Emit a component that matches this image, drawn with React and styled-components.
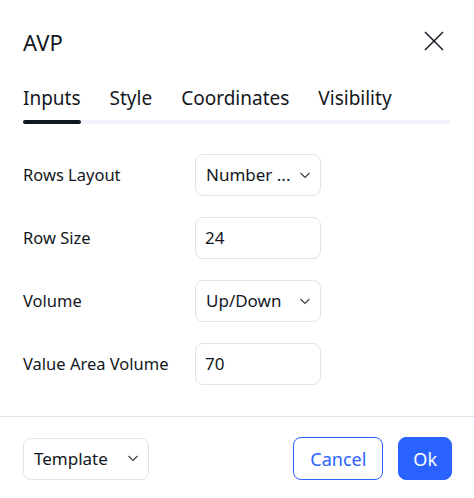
import React, { useState } from 'react';
import styled, { createGlobalStyle } from 'styled-components';

const GlobalStyle = createGlobalStyle`
  html, body {
    margin: 0;
    padding: 0;
    background: #fff;
  }
  body {
    font-family: "Noto Sans", "DejaVu Sans", sans-serif;
    color: #131722;
  }
`;

const tabs = ['Inputs', 'Style', 'Coordinates', 'Visibility'];

const fields = [
  { label: 'Rows Layout', value: 'Number ...', select: true },
  { label: 'Row Size', value: '24' },
  { label: 'Volume', value: 'Up/Down', select: true },
  { label: 'Value Area Volume', value: '70' },
];

const Chevron = () => (
  <svg width="12" height="7" viewBox="0 0 12 7" fill="none">
    <polyline points="1.5,1 6,5.5 10.5,1" stroke="#363a45" strokeWidth="1.1" />
  </svg>
);

const CloseIcon = () => (
  <svg width="20" height="20" viewBox="0 0 20 20" fill="none">
    <line x1="1" y1="1" x2="19" y2="19" stroke="#131722" strokeWidth="1.5" />
    <line x1="19" y1="1" x2="1" y2="19" stroke="#131722" strokeWidth="1.5" />
  </svg>
);

const App = () => {
  const [activeTab, setActiveTab] = useState(0);

  return (
    <>
      <GlobalStyle />
      <Dialog>
        <Header>
          <Title>AVP</Title>
          <CloseButton aria-label="Close">
            <CloseIcon />
          </CloseButton>
        </Header>

        <TabBar>
          <TabList>
            {tabs.map((tab, index) => (
              <Tab
                key={tab}
                $active={index === activeTab}
                onClick={() => setActiveTab(index)}
              >
                {tab}
              </Tab>
            ))}
          </TabList>
          <TabTrack />
        </TabBar>

        <Form>
          {fields.map((field) => (
            <React.Fragment key={field.label}>
              <Label>{field.label}</Label>
              <Control $select={field.select}>
                <ControlText>{field.value}</ControlText>
                {field.select && <Chevron />}
              </Control>
            </React.Fragment>
          ))}
        </Form>

        <Footer>
          <Control $select $width="126px">
            <ControlText>Template</ControlText>
            <Chevron />
          </Control>
          <Actions>
            <Button $variant="outline">Cancel</Button>
            <Button $variant="primary">Ok</Button>
          </Actions>
        </Footer>
      </Dialog>
    </>
  );
};

const Dialog = styled.div`
  width: 474px;
  height: 498px;
  display: flex;
  flex-direction: column;
  background: #fff;
  overflow: hidden;
`;

const Header = styled.div`
  height: 82px;
  padding: 0 30px 0 23px;
  display: flex;
  align-items: center;
  justify-content: space-between;
  box-sizing: border-box;
`;

const Title = styled.div`
  font-size: 22px;
  line-height: 28px;
  padding-top: 2px;
`;

const CloseButton = styled.div`
  display: flex;
  width: 20px;
  height: 20px;
  cursor: pointer;
`;

const TabBar = styled.div`
  padding: 4px 23px 0;
`;

const TabList = styled.div`
  display: flex;
  gap: 29px;
`;

const Tab = styled.div`
  position: relative;
  font-size: 19px;
  line-height: 24px;
  padding-bottom: 10px;
  cursor: pointer;
  color: #131722;

  &::after {
    content: '';
    display: ${(p) => (p.$active ? 'block' : 'none')};
    position: absolute;
    left: 0;
    right: 0;
    bottom: -4px;
    height: 4px;
    border-radius: 2px;
    background: #131722;
  }
`;

const TabTrack = styled.div`
  height: 4px;
  border-radius: 2px;
  background: #f0f3fa;
`;

const Form = styled.div`
  display: grid;
  grid-template-columns: 172px 126px;
  grid-auto-rows: 42px;
  row-gap: 21px;
  align-items: center;
  padding: 30px 23px 0;
  flex: 1;
`;

const Label = styled.div`
  font-size: 16.5px;
  line-height: 22px;
`;

const Control = styled.div`
  width: ${(p) => p.$width || '126px'};
  height: 42px;
  box-sizing: border-box;
  border: 1px solid #e0e3eb;
  border-radius: 8px;
  display: flex;
  align-items: center;
  justify-content: space-between;
  padding: 0 9px 0 ${(p) => (p.$select ? '10px' : '9px')};
  background: #fff;
  cursor: ${(p) => (p.$select ? 'pointer' : 'text')};
`;

const ControlText = styled.span`
  font-size: 17px;
  line-height: 22px;
  white-space: nowrap;
`;

const Footer = styled.div`
  border-top: 1px solid #e0e3eb;
  padding: 20px 22px 18px 23px;
  display: flex;
  align-items: center;
  justify-content: space-between;
`;

const Actions = styled.div`
  display: flex;
  gap: 15px;
`;

const Button = styled.button`
  height: 43px;
  padding: 0 ${(p) => (p.$variant === 'primary' ? '14px' : '16px')};
  border-radius: 8px;
  font-family: inherit;
  font-size: 18px;
  cursor: pointer;
  border: 1px solid #2962ff;
  background: ${(p) => (p.$variant === 'primary' ? '#2962ff' : '#fff')};
  color: ${(p) => (p.$variant === 'primary' ? '#fff' : '#2962ff')};
`;

export default App;
